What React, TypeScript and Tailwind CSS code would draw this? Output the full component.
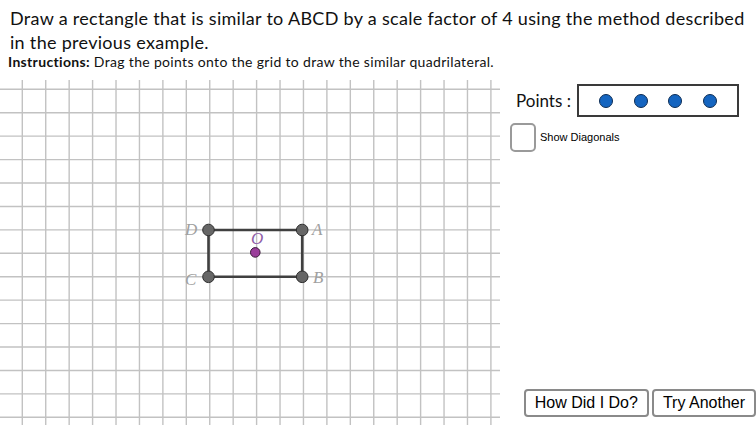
import React from "react";

const STEP = 23.43;

type Pt = { x: number; y: number; label: string; lx: number; ly: number };

const corners: Pt[] = [
  { label: "D", x: 208.5, y: 150, lx: 185, ly: 155 },
  { label: "A", x: 302.2, y: 150, lx: 312, ly: 155 },
  { label: "B", x: 302.2, y: 196.8, lx: 313, ly: 203 },
  { label: "C", x: 208.5, y: 196.8, lx: 185, ly: 205 },
];

function GridCanvas() {
  const vertical: number[] = [];
  for (let x = 22.3; x < 500; x += STEP) vertical.push(x);
  const horizontal: number[] = [];
  for (let y = 9.3; y < 345; y += STEP) horizontal.push(y);

  const [d, a, b, c] = corners;

  return (
    <svg width="500" height="345" viewBox="0 0 500 345" className="block shrink-0">
      {vertical.map((x, i) => (
        <line key={"v" + i} x1={x} y1={0} x2={x} y2={345} stroke="#c2c2c2" strokeWidth={1.4} />
      ))}
      {horizontal.map((y, i) => (
        <line key={"h" + i} x1={0} y1={y} x2={500} y2={y} stroke="#c2c2c2" strokeWidth={1.4} />
      ))}
      <polygon
        points={`${d.x},${d.y} ${a.x},${a.y} ${b.x},${b.y} ${c.x},${c.y}`}
        fill="none"
        stroke="#404040"
        strokeWidth={2.6}
      />
      {corners.map((p) => (
        <g key={p.label}>
          <circle cx={p.x} cy={p.y} r={5.8} fill="#666666" stroke="#2e2e2e" strokeWidth={1} />
          <text
            x={p.lx}
            y={p.ly}
            fill="#a0a0a0"
            fontSize={17}
            fontStyle="italic"
            fontFamily="'Liberation Serif', serif"
          >
            {p.label}
          </text>
        </g>
      ))}
      <circle cx={255.3} cy={172.4} r={4.8} fill="#9b3e9b" stroke="#3a1a3a" strokeWidth={1} />
      <text
        x={251}
        y={164}
        fill="#9060a8"
        fontSize={17}
        fontStyle="italic"
        fontFamily="'Liberation Serif', serif"
      >
        O
      </text>
    </svg>
  );
}

function PointsBox() {
  const dots = [606, 642, 677, 711];
  return (
    <div className="flex items-center">
      <span className="text-[17px] text-[#111] mr-[6px] font-['Lato',sans-serif]">Points :</span>
      <div className="w-[162px] h-[33px] border-2 border-[#3a3a3a] flex items-center justify-around px-[10px]">
        {dots.map((x) => (
          <span
            key={x}
            className="w-[14px] h-[14px] rounded-full bg-[#1565c0] border border-[#0d2d55]"
          />
        ))}
      </div>
    </div>
  );
}

function SidePanel() {
  return (
    <div className="flex-1 flex flex-col pl-[10px] pt-[4px] pb-[8px]">
      <div className="pl-[6px]">
        <PointsBox />
      </div>
      <label className="flex items-center mt-[6px] gap-[4px]">
        <span className="w-[26px] h-[29px] rounded-[5px] border-2 border-[#9a9a9a] bg-white" />
        <span className="text-[11px] text-black font-['Liberation_Sans',Arial,sans-serif]">
          Show Diagonals
        </span>
      </label>
      <div className="mt-auto flex justify-end gap-[3px]">
        <button className="h-[28px] px-[9px] border-2 border-[#8a8a8a] rounded-[4px] bg-white text-[16px] text-black font-['Liberation_Sans',Arial,sans-serif]">
          How Did I Do?
        </button>
        <button className="h-[28px] px-[9px] border-2 border-[#8a8a8a] rounded-[4px] bg-white text-[16px] text-black font-['Liberation_Sans',Arial,sans-serif]">
          Try Another
        </button>
      </div>
    </div>
  );
}

function App() {
  return (
    <div className="w-[756px] h-[425px] bg-white overflow-hidden flex flex-col">
      <div className="h-[80px] shrink-0 pl-[10px] pt-[6px]">
        <p className="text-[18px] leading-[24px] tracking-[0.3px] text-[#111] font-['Lato',sans-serif]">
          Draw a rectangle that is similar to ABCD by a scale factor of 4 using the method described
          <br />
          in the previous example.
        </p>
        <p className="text-[14px] leading-[16px] tracking-[0.33px] text-[#111] -ml-[2px] font-['Lato',sans-serif]">
          <b>Instructions:</b> Drag the points onto the grid to draw the similar quadrilateral.
        </p>
      </div>
      <div className="flex flex-1">
        <GridCanvas />
        <SidePanel />
      </div>
    </div>
  );
}

export default App;
